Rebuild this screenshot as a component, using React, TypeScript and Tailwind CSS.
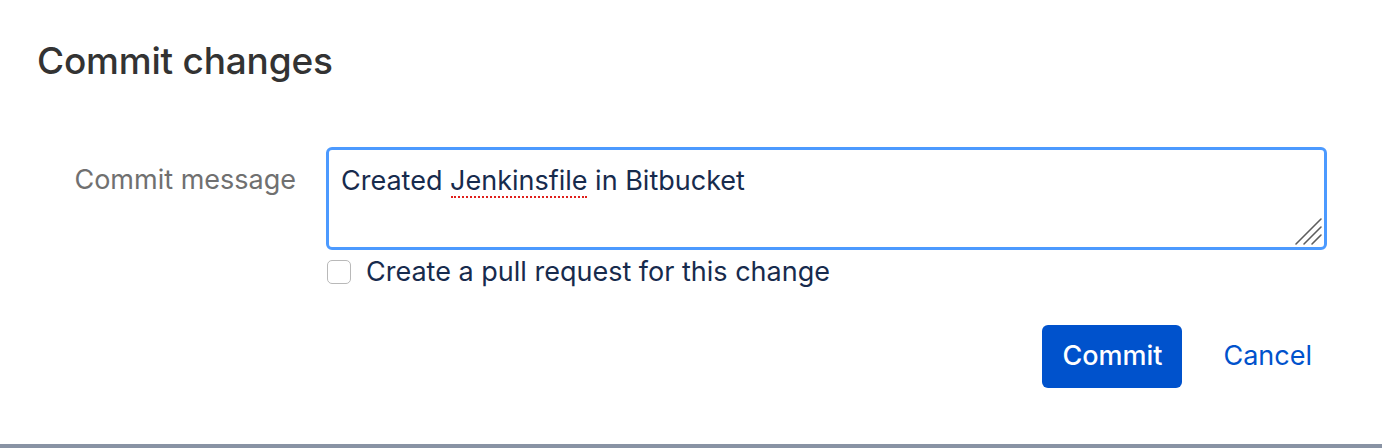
import { useState } from 'react';

// Diálogo "Commit changes" al editar un archivo en Bitbucket.
export default function App() {
  const [message, setMessage] = useState('Created Jenkinsfile in Bitbucket');
  const [createPr, setCreatePr] = useState(false);

  return (
    <div
      className="flex h-[448px] w-full flex-col bg-white"
      style={{ fontFamily: 'Inter, "Noto Sans", sans-serif' }}
    >
      <div className="flex-1">
        <h2 className="pl-[37px] pt-[38px] text-[37px] font-medium leading-[46px] tracking-[-0.2px] text-[#333333]">
          Commit changes
        </h2>

        <form className="mt-[63px] flex flex-col" onSubmit={(e) => e.preventDefault()}>
          <div className="flex">
            <label
              htmlFor="commit-message"
              className="w-[326px] pr-[30px] pt-[15px] text-right text-[27px] leading-[36px] text-[#707070]"
            >
              Commit message
            </label>
            <div className="flex flex-col">
              <div className="relative">
                <textarea
                  id="commit-message"
                  value={message}
                  onChange={(e) => setMessage(e.target.value)}
                  spellCheck={false}
                  className="block h-[103px] w-[1001px] resize-none rounded-[6px] border-[3px] border-[#4c9aff] px-[12px] pb-[8px] pt-[13px] text-[27px] leading-[36px] text-[#172b4d] outline-none"
                />
                {/* subrayado del corrector ortográfico */}
                <span className="pointer-events-none absolute left-[125px] top-[49px] h-0 w-[136px] border-b-[2px] border-dotted border-[#e0201c]" />
                <svg
                  className="pointer-events-none absolute bottom-[3px] right-[4px]"
                  width="30"
                  height="30"
                  viewBox="0 0 30 30"
                  stroke="#5e5e5e"
                  strokeWidth="1.6"
                  strokeLinecap="round"
                >
                  <line x1="3" y1="27" x2="28" y2="2" />
                  <line x1="11" y1="27" x2="28" y2="10" />
                  <line x1="19" y1="27" x2="28" y2="18" />
                </svg>
              </div>
              <label className="mt-[4px] flex items-center gap-[15px] text-[27px] leading-[36px] text-[#172b4d]">
                <input
                  type="checkbox"
                  checked={createPr}
                  onChange={(e) => setCreatePr(e.target.checked)}
                  className="ml-[1px] h-[24px] w-[24px] appearance-none rounded-[5px] border-[1.5px] border-[#b9b9b9] bg-white"
                />
                Create a pull request for this change
              </label>
            </div>
          </div>

          <div className="mr-[70px] mt-[35px] flex items-center justify-end gap-[41px]">
            <button
              type="submit"
              className="h-[63px] rounded-[6px] bg-[#0052cc] px-[20px] text-[27px] font-medium text-white"
            >
              Commit
            </button>
            <button type="button" className="text-[27px] text-[#0052cc]">
              Cancel
            </button>
          </div>
        </form>
      </div>
      <div className="h-[4px] bg-[#8993a4]" />
    </div>
  );
}
